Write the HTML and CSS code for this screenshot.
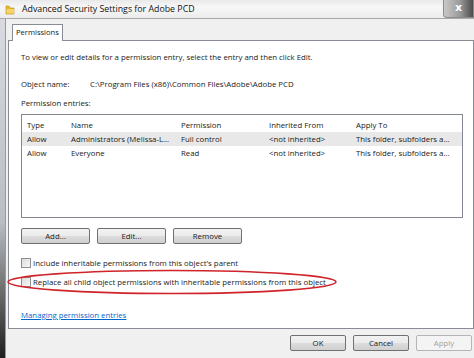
FILE: index.html
```html
<!DOCTYPE html>
<html>
<head>
<meta charset="utf-8">
<link rel="stylesheet" href="styles.css">
</head>
<body>
<div class="window">
  <div class="titlebar">
    <svg class="folder" width="10" height="12" viewBox="0 0 10 12">
      <path d="M1 3 L1 11 L9 11 L9 5 L5 5 L4 3 Z" fill="#e8b830" stroke="#b88a18" stroke-width="0.6"/>
      <path d="M1.5 10.5 L1.5 6 L9 6 L9 10.5 Z" fill="#f4d36a"/>
    </svg>
    <span class="title">Advanced Security Settings for Adobe PCD</span>
    <div class="close">x</div>
  </div>
  <div class="body">
    <div class="frame-left"></div>
    <div class="client">
      <div class="tabs"><div class="tab">Permissions</div></div>
      <div class="panel">
        <p class="intro">To view or edit details for a permission entry, select the entry and then click Edit.</p>
        <div class="objrow"><span class="objlabel">Object name:</span><span>C:\Program Files (x86)\Common Files\Adobe\Adobe PCD</span></div>
        <p class="entries-label">Permission entries:</p>
        <div class="list">
          <div class="row head">
            <span class="c1">Type</span><span class="c2">Name</span><span class="c3">Permission</span><span class="c4">Inherited From</span><span class="c5">Apply To</span>
          </div>
          <div class="row sel">
            <span class="c1">Allow</span><span class="c2">Administrators (Melissa-L...</span><span class="c3">Full control</span><span class="c4">&lt;not inherited&gt;</span><span class="c5">This folder, subfolders a...</span>
          </div>
          <div class="row">
            <span class="c1">Allow</span><span class="c2">Everyone</span><span class="c3">Read</span><span class="c4">&lt;not inherited&gt;</span><span class="c5">This folder, subfolders a...</span>
          </div>
        </div>
        <div class="btnrow">
          <button class="btn">Add...</button>
          <button class="btn">Edit...</button>
          <button class="btn">Remove</button>
        </div>
        <label class="check"><span class="box"></span>Include inheritable permissions from this object's parent</label>
        <label class="check second"><span class="box"></span>Replace all child object permissions with inheritable permissions from this object</label>
        <a class="link" href="#">Managing permission entries</a>
      </div>
      <div class="footer">
        <button class="btn sm">OK</button>
        <button class="btn sm">Cancel</button>
        <button class="btn sm disabled">Apply</button>
      </div>
    </div>
  </div>
  <svg class="ellipse" width="474" height="358" viewBox="0 0 474 358">
    <ellipse cx="172" cy="282" rx="164" ry="11.5" fill="none" stroke="#d0232a" stroke-width="1.6"/>
  </svg>
</div>
</body>
</html>
```
FILE: styles.css
```css
* { box-sizing: border-box; }
html, body { margin: 0; padding: 0; }
body {
  width: 474px;
  height: 358px;
  overflow: hidden;
  font-family: "Open Sans", "Noto Sans", sans-serif;
  font-size: 7.8px;
  color: #202020;
  background: #f0f0f0;
}
.window {
  position: relative;
  width: 474px;
  height: 358px;
  display: flex;
  flex-direction: column;
}
.titlebar {
  height: 19px;
  flex: none;
  display: flex;
  align-items: center;
  background: linear-gradient(180deg, #e9e9e9 0%, #f7f7f7 40%, #ececec 100%);
  border-bottom: 1px solid #a9a9a9;
  position: relative;
}
.folder { margin-left: 5px; margin-right: 7px; }
.title { font-size: 8.8px; color: #111; }
.close {
  position: absolute;
  right: 0;
  top: 0;
  width: 31px;
  height: 18px;
  background: linear-gradient(90deg, #c8c8c8 0%, #9a9a9a 55%, #4a4a4a 100%);
  border: 1px solid #8c8c8c;
  border-top: none;
  border-radius: 0 0 0 4px;
  color: #fff;
  font-weight: bold;
  font-size: 11px;
  line-height: 15px;
  text-align: center;
  font-family: "DejaVu Sans", sans-serif;
}
.body {
  flex: 1;
  display: flex;
}
.frame-left {
  width: 6px;
  background: linear-gradient(180deg, #d8dbe0 0%, #b8bdc4 60%, #6e6e6e 80%, #1e1e1e 100%);
  border-right: 1px solid #9a9a9a;
}
.client {
  flex: 1;
  display: flex;
  flex-direction: column;
  background: #f0f0f0;
  padding: 5px 0 0 2px;
}
.tabs {
  display: flex;
  flex: none;
  padding-left: 4px;
  height: 16px;
  position: relative;
  z-index: 1;
}
.tab {
  width: 51px;
  height: 17px;
  background: #fff;
  border: 1px solid #898c95;
  border-bottom: none;
  font-size: 7.6px;
  line-height: 15px;
  padding-left: 3px;
  white-space: nowrap;
}
.panel {
  height: 289px;
  flex: none;
  background: #fff;
  border: 1px solid #898c95;
  padding: 9px 9px 0 12px;
  display: flex;
  flex-direction: column;
}
.panel > * { flex: none; }
.intro { margin: 0; height: 14px; line-height: 14px; }
.objrow { margin-top: 13px; height: 14px; line-height: 14px; display: flex; }
.objlabel { width: 69px; }
.entries-label { margin: 5px 0 0; height: 14px; line-height: 14px; }
.list {
  margin-top: 4px;
  height: 104px;
  width: 442px;
  border: 1px solid #828790;
  background: #fff;
}
.row {
  display: flex;
  height: 14px;
  line-height: 14px;
  white-space: nowrap;
}
.row.head { height: 17px; padding-top: 3px; }
.row.sel { background: #e8e8e8; }
.c1 { width: 48px; padding-left: 5px; }
.c2 { width: 110px; padding-left: 1px; }
.c3 { width: 88px; padding-left: 1px; }
.c4 { width: 87px; padding-left: 1px; }
.c5 { width: 105px; padding-left: 1px; }
.btnrow {
  display: flex;
  gap: 7px;
  margin-top: 10px;
}
.btn {
  width: 69px;
  height: 16px;
  padding: 0;
  font-family: inherit;
  font-size: 7.8px;
  color: #202020;
  border: 1px solid #707070;
  border-radius: 2px;
  background: linear-gradient(180deg, #f2f2f2 0%, #ebebeb 48%, #dddddd 52%, #cfcfcf 100%);
  line-height: 14px;
}
.check {
  display: flex;
  align-items: center;
  margin-top: 13px;
  height: 12px;
  line-height: 12px;
  white-space: nowrap;
}
.check.second { margin-top: 7px; }
.box {
  width: 10px;
  height: 10px;
  border: 1px solid #8e8f8f;
  background: linear-gradient(135deg, #dcdcdc, #f8f8f8);
  margin-right: 2px;
  flex: none;
}
.link {
  margin-top: 20px;
  color: #0066cc;
  text-decoration: underline;
  height: 14px;
  line-height: 14px;
  align-self: flex-start;
}
.footer {
  display: flex;
  justify-content: flex-end;
  gap: 7px;
  padding-top: 6px;
  padding-right: 2px;
}
.btn.sm { width: 56px; height: 16px; }
.btn.disabled {
  color: #a0a0a0;
  border-color: #b5b5b5;
  background: #f4f4f4;
}
.ellipse {
  position: absolute;
  left: 0;
  top: 0;
  pointer-events: none;
}
```
